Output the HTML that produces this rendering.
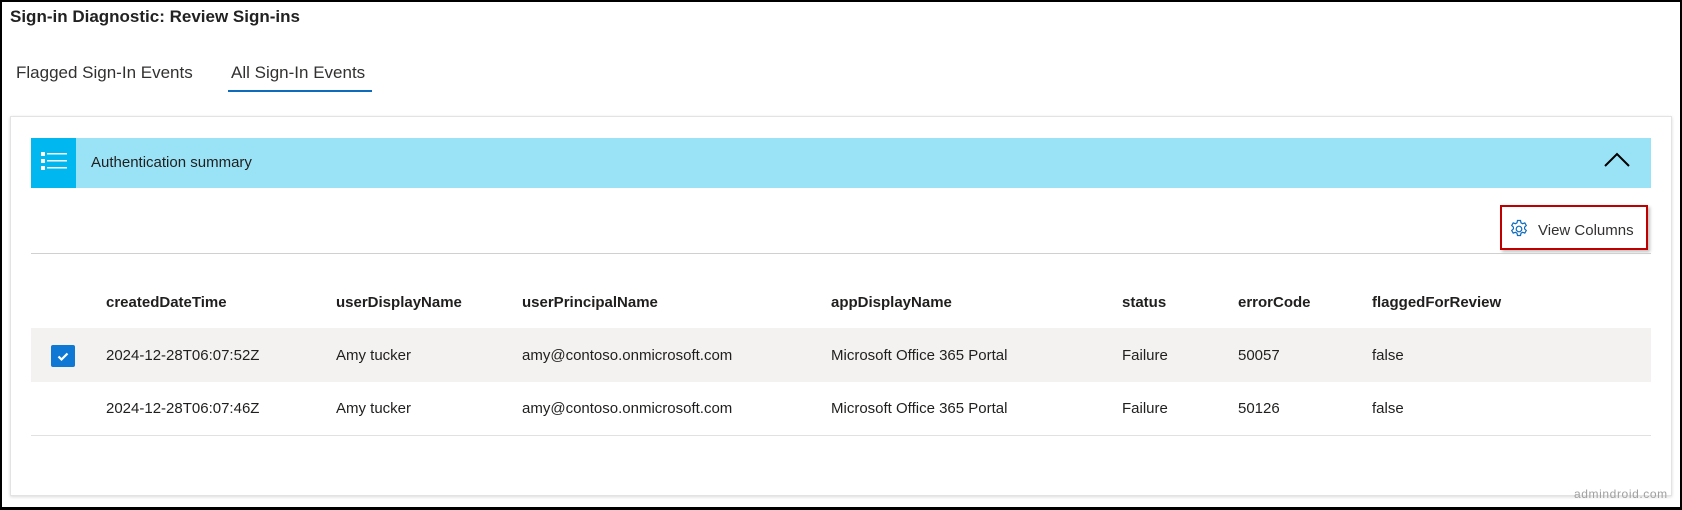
<!DOCTYPE html>
<html><head><style>
*{margin:0;padding:0;box-sizing:border-box}
body{width:1682px;height:510px;overflow:hidden;background:#fff;font-family:"Liberation Sans",sans-serif;color:#201f1e;position:relative}
.frame{position:absolute;left:0;top:0;width:1682px;height:510px;border:2px solid #000;border-bottom-width:3px}
.abs{position:absolute;white-space:nowrap}
.title{left:10px;top:7px;font-size:17px;font-weight:bold;color:#222}
.tab{top:63px;font-size:17px;color:#323130}
.card{left:10px;top:116px;width:1662px;height:380px;border:1px solid #e3e3e3;box-shadow:0 1px 3px rgba(0,0,0,.15)}
.banner{left:31px;top:138px;width:1620px;height:50px;background:#9ae3f7}
.bicon{left:31px;top:138px;width:45px;height:50px;background:#00b7f0}
.th{top:294px;font-size:15px;font-weight:bold}
.td{font-size:15px}
</style></head><body>
<div class="frame"></div>
<div class="abs title">Sign-in Diagnostic: Review Sign-ins</div>
<div class="abs tab" style="left:16px">Flagged Sign-In Events</div>
<div class="abs tab" style="left:231px">All Sign-In Events</div>
<div class="abs" style="left:228px;top:90px;width:144px;height:2px;background:#0f6cbd"></div>
<div class="abs card"></div>
<div class="abs banner"></div>
<div class="abs bicon">
<svg width="45" height="50" viewBox="0 0 45 50"><g fill="#fff"><rect x="10" y="14" width="4" height="4"/><rect x="10" y="21" width="4" height="4"/><rect x="10" y="28" width="4" height="4"/><rect x="16" y="15" width="20" height="1.5"/><rect x="16" y="22" width="20" height="1.5"/><rect x="16" y="29" width="20" height="1.5"/></g></svg>
</div>
<div class="abs" style="left:91px;top:154px;font-size:15px">Authentication summary</div>
<svg class="abs" style="left:1604px;top:152px" width="26" height="16" viewBox="0 0 26 16"><path d="M1 14 L13 2 L25 14" stroke="#000" stroke-width="2" fill="none"/></svg>
<div class="abs" style="left:1500px;top:205px;width:148px;height:45px;border:2px solid #c00000;box-shadow:2px 2px 3px rgba(0,0,0,.25)"></div>
<svg class="abs" style="left:1509px;top:219px" width="20" height="20" viewBox="0 0 20 20"><g fill="none" stroke="#0f6cbd" stroke-width="1.2"><path d="M8.5 1.5h3l.5 2.3 1.6.9 2.2-.8 1.5 2.6-1.7 1.6v1.8l1.7 1.6-1.5 2.6-2.2-.8-1.6.9-.5 2.3h-3l-.5-2.3-1.6-.9-2.2.8-1.5-2.6 1.7-1.6V8.1L2.7 6.5l1.5-2.6 2.2.8 1.6-.9z"/><circle cx="10" cy="10" r="2.8"/></g></svg>
<div class="abs" style="left:1538px;top:222px;font-size:15px;color:#323130">View Columns</div>
<div class="abs" style="left:31px;top:253px;width:1620px;height:1px;background:#d0d0d0"></div>
<div class="abs th" style="left:106px">createdDateTime</div>
<div class="abs th" style="left:336px">userDisplayName</div>
<div class="abs th" style="left:522px">userPrincipalName</div>
<div class="abs th" style="left:831px">appDisplayName</div>
<div class="abs th" style="left:1122px">status</div>
<div class="abs th" style="left:1238px">errorCode</div>
<div class="abs th" style="left:1372px">flaggedForReview</div>
<div class="abs" style="left:31px;top:328px;width:1620px;height:54px;background:#f3f2f1"></div>
<div class="abs" style="left:51px;top:345px;width:24px;height:22px;background:#0f78d4;border-radius:2px"></div>
<svg class="abs" style="left:51px;top:345px" width="24" height="22" viewBox="0 0 24 22"><path d="M7.5 11.5l3 3 6-6" stroke="#fff" stroke-width="2.2" fill="none"/></svg>
<div class="abs" style="left:31px;top:435px;width:1620px;height:1px;background:#e1e1e1"></div>
<div class="abs td" style="left:106px;top:347px">2024-12-28T06:07:52Z</div>
<div class="abs td" style="left:336px;top:347px">Amy tucker</div>
<div class="abs td" style="left:522px;top:347px">amy@contoso.onmicrosoft.com</div>
<div class="abs td" style="left:831px;top:347px">Microsoft Office 365 Portal</div>
<div class="abs td" style="left:1122px;top:347px">Failure</div>
<div class="abs td" style="left:1238px;top:347px">50057</div>
<div class="abs td" style="left:1372px;top:347px">false</div>
<div class="abs td" style="left:106px;top:400px">2024-12-28T06:07:46Z</div>
<div class="abs td" style="left:336px;top:400px">Amy tucker</div>
<div class="abs td" style="left:522px;top:400px">amy@contoso.onmicrosoft.com</div>
<div class="abs td" style="left:831px;top:400px">Microsoft Office 365 Portal</div>
<div class="abs td" style="left:1122px;top:400px">Failure</div>
<div class="abs td" style="left:1238px;top:400px">50126</div>
<div class="abs td" style="left:1372px;top:400px">false</div>
<div class="abs" style="left:1574px;top:487px;font-size:12px;color:#a0a0a0;letter-spacing:0.6px">admindroid.com</div>
</body></html>
